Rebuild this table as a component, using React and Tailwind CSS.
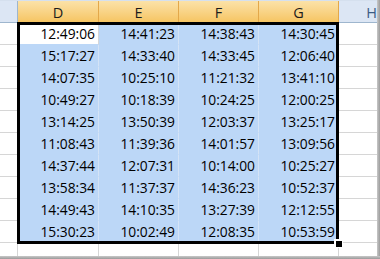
const rows = [
  ["12:49:06", "14:41:23", "14:38:43", "14:30:45"],
  ["15:17:27", "14:33:40", "14:33:45", "12:06:40"],
  ["14:07:35", "10:25:10", "11:21:32", "13:41:10"],
  ["10:49:27", "10:18:39", "10:24:25", "12:00:25"],
  ["13:14:25", "13:50:39", "12:03:37", "13:25:17"],
  ["11:08:43", "11:39:36", "14:01:57", "13:09:56"],
  ["14:37:44", "12:07:31", "10:14:00", "10:25:27"],
  ["13:58:34", "11:37:37", "14:36:23", "10:52:37"],
  ["14:49:43", "14:10:35", "13:27:39", "12:12:55"],
  ["15:30:23", "10:02:49", "12:08:35", "10:53:59"],
];

const widths = ["w-[81px]", "w-[80px]", "w-[80px]", "w-[80px]"];

const HeaderRow = () => (
  <div className="flex h-[23px] border-t border-[#d5e0ee] text-[14.5px]">
    <div className="w-[18px] border-r border-b border-[#9eb6ce] bg-[#dce6f4]" />
    {["D", "E", "F", "G"].map((l, i) => (
      <div
        key={l}
        className={`${widths[i]} flex items-center justify-center pt-[2px] border-r border-[#e3a84a] border-b border-b-[#f29a3c] bg-gradient-to-b from-[#fbe2a8] to-[#f6c562] text-[#1c1c1c]`}
      >
        {l}
      </div>
    ))}
    <div className="flex-1 flex items-center justify-end pt-[2px] border-b border-[#9eb6ce] bg-[#dce6f4] text-[#3b5c85]">
      <span>H</span>
    </div>
  </div>
);

const DataRow = ({ vals, first }) => (
  <div className="flex h-[22px]">
    <div className="w-[18px] border-r border-b border-[#d6d6d6] bg-white" />
    {vals.map((v, i) => {
      const active = first && i === 0;
      return (
        <div
          key={i}
          className={`${widths[i]} flex items-center justify-end pr-[3px] pt-[2px] border-r ${
            active ? "bg-white border-[#d6d6d6] border-b border-b-[#bcd7f7]" : "bg-[#bcd7f7] border-[#d4e3f6] border-b border-b-[#bcd7f7]"
          }`}
        >
          {v}
        </div>
      );
    })}
    <div className="flex-1 border-b border-[#d6d6d6] bg-white" />
  </div>
);

const EmptyRow = () => (
  <div className="flex h-[22px]">
    <div className="w-[18px] border-r border-b border-[#d6d6d6]" />
    {widths.map((w, i) => (
      <div key={i} className={`${w} border-r border-b border-[#d6d6d6]`} />
    ))}
    <div className="flex-1 border-b border-[#d6d6d6]" />
  </div>
);

export default function App() {
  return (
    <div
      className="w-[380px] h-[259px] flex flex-col overflow-hidden bg-white text-[13.8px] text-black"
      style={{ fontFamily: '"Open Sans", "Liberation Sans", sans-serif' }}
    >
      <div className="flex h-[256px]">
        <div className="relative w-[377px] h-[256px] overflow-hidden">
          <HeaderRow />
          {rows.map((r, i) => (
            <DataRow key={i} vals={r} first={i === 0} />
          ))}
          <EmptyRow />

          {/* selection outline */}
          <div className="absolute left-[17px] top-[22px] w-[322px] h-[222px] border-[3px] border-black pointer-events-none" />
          {/* fill handle */}
          <div className="absolute left-[334px] top-[239px] w-[9px] h-[9px] bg-white flex items-center justify-center">
            <div className="w-[6px] h-[6px] bg-black" />
          </div>
        </div>
        <div className="w-[3px] bg-gradient-to-r from-[#c8c8c8] to-[#9c9c9c]" />
      </div>
      <div className="h-[3px] bg-gradient-to-b from-[#c8c8c8] to-[#9a9a9a]" />
    </div>
  );
}
